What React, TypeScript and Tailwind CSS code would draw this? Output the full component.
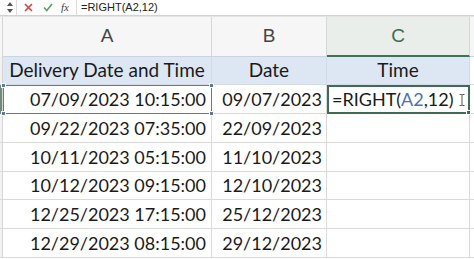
import React from "react";

const cellFont = { fontFamily: "Lato, 'Open Sans', sans-serif" };

const rows: { a: string; b: string; h: string }[] = [
  { a: "09/22/2023 07:35:00", b: "22/09/2023", h: "h-[29px]" },
  { a: "10/11/2023 05:15:00", b: "11/10/2023", h: "h-[29px]" },
  { a: "10/12/2023 09:15:00", b: "12/10/2023", h: "h-[28px]" },
  { a: "12/25/2023 17:15:00", b: "25/12/2023", h: "h-[29px]" },
  { a: "12/29/2023 08:15:00", b: "29/12/2023", h: "h-[29px]" },
];

function Handle({ className }: { className: string }) {
  return <div className={"absolute w-[5px] h-[5px] bg-[#5a78a8] border border-white " + className} />;
}

export default function App() {
  return (
    <div className="w-[474px] h-[259px] overflow-hidden bg-white text-[#1a1a1a]" style={cellFont}>
      {/* formula bar */}
      <div className="flex items-center h-[16px] bg-white border-b border-[#d2d2d2]">
        <div className="w-[17px] h-full flex flex-col items-center justify-center gap-[3px] border-r border-[#dcdcdc] pl-[3px]">
          <svg width="6" height="4" viewBox="0 0 6 4"><path d="M0 4 L3 0 L6 4 Z" fill="#555" /></svg>
          <svg width="6" height="4" viewBox="0 0 6 4"><path d="M0 0 L3 4 L6 0 Z" fill="#555" /></svg>
        </div>
        <div className="w-[60px] h-full flex items-center border-r border-[#dcdcdc]">
          <svg className="ml-[7px]" width="9" height="9" viewBox="0 0 9 9">
            <path d="M1 1 L8 8 M8 1 L1 8" stroke="#d0473f" strokeWidth="1.6" />
          </svg>
          <svg className="ml-[10px]" width="10" height="9" viewBox="0 0 10 9">
            <path d="M1 4.5 L3.8 7.5 L9 1" stroke="#5e9e66" strokeWidth="1.6" fill="none" />
          </svg>
          <span className="ml-[8px] text-[11px] italic text-[#444] leading-none" style={{ fontFamily: "'Liberation Serif', serif" }}>fx</span>
        </div>
        <div className="pl-[4px] text-[11px] text-[#222] leading-none" style={{ fontFamily: "'Liberation Sans', Arial, sans-serif" }}>
          =RIGHT(A2,12)
        </div>
      </div>
      {/* column headers */}
      <div className="flex h-[41px] bg-[#f6f6f6] border-t border-[#e4e4e4]" style={{ fontFamily: "'Liberation Sans', Arial, sans-serif" }}>
        <div className="w-[3px] border-r border-[#d6d6d6]" />
        <div className="w-[209px] flex items-center justify-center border-r border-[#d6d6d6] border-b border-b-[#c9d3e2] text-[19px] text-[#444]">A</div>
        <div className="w-[115px] flex items-center justify-center border-r border-[#d6d6d6] border-b border-b-[#c9d3e2] text-[19px] text-[#444]">B</div>
        <div className="w-[143px] flex items-center justify-center border-r border-[#d6d6d6] border-b-2 border-b-[#3f7256] bg-[#eaeeeb] text-[19px] text-[#3d6a50]">C</div>
        <div className="flex-1 border-b border-b-[#c9d3e2]" />
      </div>
      {/* row 1 headers */}
      <div className="flex h-[28px] text-[19px]">
        <div className="w-[3px] bg-[#f2f2f2] border-r border-[#d6d6d6] border-b border-b-[#dadada]" />
        <div className="w-[209px] flex items-center justify-center bg-[#dde7f4] border-r border-b border-[#d4dbe6]">Delivery Date and Time</div>
        <div className="w-[115px] flex items-center justify-center bg-[#dde7f4] border-r border-b border-[#d4dbe6]">Date</div>
        <div className="w-[143px] flex items-center justify-center bg-[#dde7f4] border-r border-b border-[#d4dbe6]">Time</div>
        <div className="flex-1 border-b border-[#dadada]" />
      </div>
      {/* row 2 */}
      <div className="flex h-[29px] text-[18px]">
        <div className="w-[3px] bg-[#6f8a78] border-r border-[#d6d6d6]" />
        <div className="relative w-[209px] flex items-center justify-end pr-[5px] border border-[#5a78a8]">
          07/09/2023 10:15:00
          <Handle className="-left-[3px] -top-[3px]" />
          <Handle className="-right-[3px] -top-[3px]" />
          <Handle className="-left-[3px] -bottom-[3px]" />
          <Handle className="-right-[3px] -bottom-[3px]" />
        </div>
        <div className="w-[115px] flex items-center justify-end pr-[4px] border-r border-b border-[#dadada]">09/07/2023</div>
        <div className="relative w-[143px] flex items-center pl-[3px] border-2 border-[#3f6b52]">
          <span>=RIGHT(</span>
          <span className="text-[#4a72b8]">A2</span>
          <span>,12)</span>
          <svg className="absolute right-[3px] top-[7px]" width="6" height="12" viewBox="0 0 6 12">
            <path d="M0.5 0.5 H2.5 L3 1 L3.5 0.5 H5.5 M3 1 V11 M0.5 11.5 H2.5 L3 11 L3.5 11.5 H5.5" stroke="#555" strokeWidth="1" fill="none" />
          </svg>
          <div className="absolute -right-[3px] -bottom-[3px] w-[5px] h-[5px] bg-[#3f6b52] border border-white" />
        </div>
        <div className="flex-1 border-b border-[#dadada]" />
      </div>
      {rows.map((r, i) => (
        <div key={i} className={"flex text-[18px] " + r.h}>
          <div className="w-[3px] bg-[#f2f2f2] border-r border-[#d6d6d6] border-b border-b-[#dadada]" />
          <div className="w-[209px] flex items-center justify-end pr-[5px] border-r border-b border-[#dadada]">{r.a}</div>
          <div className="w-[115px] flex items-center justify-end pr-[4px] border-r border-b border-[#dadada]">{r.b}</div>
          <div className="w-[143px] border-r border-b border-[#dadada]" />
          <div className="flex-1 border-b border-[#dadada]" />
        </div>
      ))}
    </div>
  );
}
